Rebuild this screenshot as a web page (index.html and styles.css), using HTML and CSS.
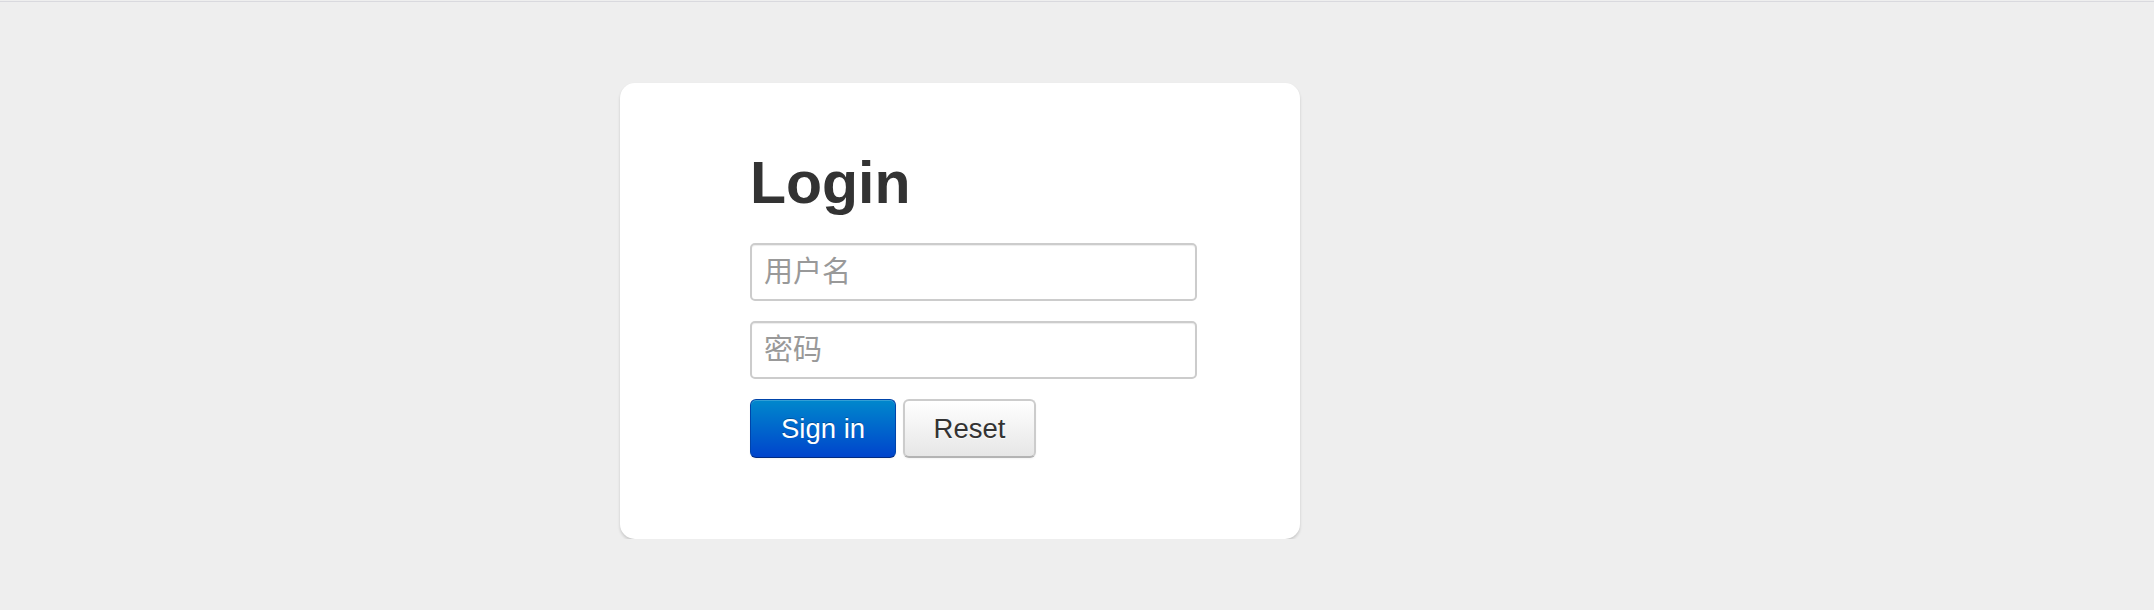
FILE: index.html
```html
<!DOCTYPE html>
<html lang="zh-CN">
<head>
<meta charset="utf-8">
<title>Login</title>
<link rel="stylesheet" href="styles.css">
</head>
<body>
<div class="topline"></div>
<div class="page">
  <form class="card">
    <h1 class="title">Login</h1>
    <input class="field" type="text" placeholder="用户名">
    <input class="field" type="password" placeholder="密码">
    <div class="actions">
      <button class="btn btn-primary" type="submit">Sign in</button>
      <button class="btn btn-default" type="reset">Reset</button>
    </div>
  </form>
</div>
</body>
</html>
```

FILE: styles.css
```css
html, body {
  margin: 0;
  padding: 0;
  background: #eeeeee;
  font-family: "Liberation Sans", Arial, "Noto Sans CJK SC", sans-serif;
  color: #333333;
}

.topline {
  margin-top: 1px;
  height: 1px;
  background: #d9d9de;
}

.page {
  padding: 81px 0 0 620px;
}

.card {
  box-sizing: border-box;
  width: 680px;
  height: 456px;
  background: #ffffff;
  border-radius: 15px;
  box-shadow: 0 2px 3px rgba(0, 0, 0, 0.16);
  padding: 68px 0 0 130px;
  display: flex;
  flex-direction: column;
  align-items: flex-start;
}

.title {
  margin: 0 0 28px 0;
  font-size: 59px;
  line-height: 64px;
  font-weight: bold;
  color: #333333;
}

.field {
  box-sizing: border-box;
  width: 447px;
  height: 58px;
  margin: 0 0 20px 0;
  padding: 0 12px;
  border: 2px solid #cccccc;
  border-radius: 5px;
  background: #ffffff;
  font-family: "Liberation Sans", Arial, "Noto Sans CJK SC", sans-serif;
  font-size: 29px;
  color: #555555;
  outline: none;
  box-shadow: inset 0 1px 1px rgba(0, 0, 0, 0.075);
}

.field::placeholder {
  color: #999999;
}

.actions {
  display: flex;
  gap: 7px;
}

.btn {
  box-sizing: border-box;
  height: 59px;
  padding: 0;
  border-radius: 6px;
  font-family: "Liberation Sans", Arial, sans-serif;
  font-size: 27.5px;
  line-height: 1;
  cursor: pointer;
}

.btn-primary {
  width: 146px;
  color: #ffffff;
  background: linear-gradient(to bottom, #0088cc, #0044cc);
  border: 1px solid #0044aa;
  border-bottom-color: #002a80;
  text-shadow: 0 -1px 0 rgba(0, 0, 0, 0.25);
  box-shadow: inset 0 1px 0 rgba(255, 255, 255, 0.2), 0 1px 2px rgba(0, 0, 0, 0.05);
}

.btn-default {
  width: 133px;
  color: #333333;
  background: linear-gradient(to bottom, #ffffff, #e6e6e6);
  border: 2px solid #cccccc;
  border-bottom-color: #b3b3b3;
  text-shadow: 0 1px 1px rgba(255, 255, 255, 0.75);
  box-shadow: inset 0 1px 0 rgba(255, 255, 255, 0.2), 0 1px 2px rgba(0, 0, 0, 0.05);
}
```
